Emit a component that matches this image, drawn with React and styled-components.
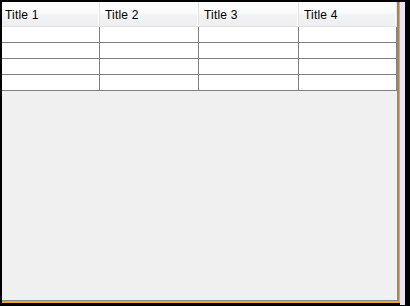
import React from 'react'
import styled, { createGlobalStyle } from 'styled-components'

const GlobalStyle = createGlobalStyle`
  html, body {
    margin: 0;
    padding: 0;
    background: #000;
  }
  body {
    font-family: "Liberation Sans", Arial, sans-serif;
  }
`

const titles = ['Title 1', 'Title 2', 'Title 3', 'Title 4']
const rows = [0, 1, 2, 3]

const App = () => {
  return (
    <>
      <GlobalStyle />
      <Screen>
        <Frame>
          <Panel>
            <Table>
              <HeaderRow>
                {titles.map((t, i) => (
                  <HeaderCell key={t} $first={i === 0}>
                    {t}
                  </HeaderCell>
                ))}
              </HeaderRow>
              {rows.map((r) => (
                <Row key={r}>
                  {titles.map((t) => (
                    <Cell key={t} />
                  ))}
                </Row>
              ))}
            </Table>
          </Panel>
        </Frame>
        <SideStrip />
      </Screen>
    </>
  )
}

const Screen = styled.div`
  display: flex;
  width: 410px;
  height: 306px;
  box-sizing: border-box;
  padding: 2px 5px 0 2px;
  background: #000;
`

const Frame = styled.div`
  display: flex;
  flex: 1;
  height: 301px;
  box-sizing: border-box;
  border-right: 1px solid #f5a623;
  border-bottom: 2px solid #f5a623;
`

const Panel = styled.div`
  flex: 1;
  box-sizing: border-box;
  background: #f0f0f0;
  border-right: 2px solid #8a8a8a;
  border-bottom: 1px solid #8a8a8a;
`

const SideStrip = styled.div`
  width: 6px;
  height: 303px;
  background: #e4e4fb;
`

const Table = styled.div`
  display: flex;
  flex-direction: column;
`

const HeaderRow = styled.div`
  display: grid;
  grid-template-columns: 98px 99px 100px 98px;
  height: 24px;
  border-bottom: 1px solid #e3e3e3;
`

const HeaderCell = styled.div`
  display: flex;
  align-items: center;
  padding: 2px 0 0 ${(p) => (p.$first ? '3px' : '5px')};
  font-size: 12px;
  letter-spacing: 0.2px;
  color: #000;
  background: linear-gradient(#ffffff 0%, #fafafa 45%, #f1f2f3 55%, #eeeff0 100%);
  border-right: 1px solid #e3e3e3;
  box-shadow: inset -1px 0 0 #ffffff;
`

const Row = styled.div`
  display: grid;
  grid-template-columns: 98px 99px 100px 98px;
  height: 15px;
  border-bottom: 1px solid #808080;
  background: #fff;
`

const Cell = styled.div`
  border-right: 1px solid #808080;
`

export default App
